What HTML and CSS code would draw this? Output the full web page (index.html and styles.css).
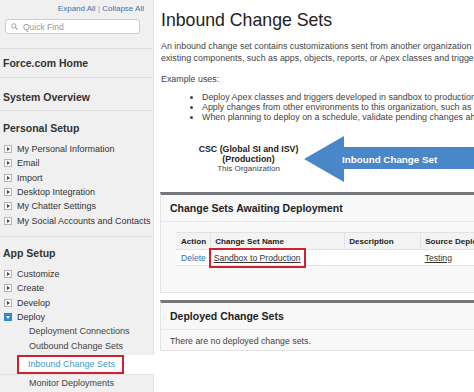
FILE: index.html
```html
<!DOCTYPE html>
<html lang="en">
<head>
  <meta charset="UTF-8" />
  <title>Inbound Change Sets</title>
  <link rel="stylesheet" href="styles.css">
</head>
<body>
  <div class="page">
    <aside class="sidebar">
      <div class="side-top">
        <div class="expand"><a href="#">Expand All</a> | <a href="#">Collapse All</a></div>
        <div class="quick-find">
          <svg width="7" height="7" viewBox="0 0 8 8"><circle cx="3.2" cy="3.2" r="2.4" fill="none" stroke="#999" stroke-width="1"/><path d="M5 5 L7.5 7.5" stroke="#999" stroke-width="1.2"/></svg>
          <span>Quick Find</span>
        </div>
      </div>
      <div class="nav-head home">Force.com Home</div>
      <div class="nav-head overview">System Overview</div>

      <div class="nav-group personal">
        <div class="group-title">Personal Setup</div>
        <div class="item"><span class="tog"></span>My Personal Information</div>
        <div class="item"><span class="tog"></span>Email</div>
        <div class="item"><span class="tog"></span>Import</div>
        <div class="item"><span class="tog"></span>Desktop Integration</div>
        <div class="item"><span class="tog"></span>My Chatter Settings</div>
        <div class="item"><span class="tog"></span>My Social Accounts and Contacts</div>
      </div>

      <div class="nav-group app">
        <div class="group-title">App Setup</div>
        <div class="item"><span class="tog"></span>Customize</div>
        <div class="item"><span class="tog"></span>Create</div>
        <div class="item"><span class="tog"></span>Develop</div>
        <div class="item"><span class="tog open"></span>Deploy</div>
        <div class="sub">Deployment Connections</div>
        <div class="sub">Outbound Change Sets</div>
        <div class="sub-selected"><span class="sel-box">Inbound Change Sets</span></div>
        <div class="sub last">Monitor Deployments</div>
      </div>
    </aside>

    <main class="content">
      <h1>Inbound Change Sets</h1>
      <p class="intro">An inbound change set contains customizations sent from another organization to this organization. It can contain<br>existing components, such as apps, objects, reports, or Apex classes and triggers.</p>
      <p class="uses">Example uses:</p>
      <ul class="use-list">
        <li>Deploy Apex classes and triggers developed in sandbox to production</li>
        <li>Apply changes from other environments to this organization, such as new fields</li>
        <li>When planning to deploy on a schedule, validate pending changes ahead of time</li>
      </ul>

      <div class="flow">
        <div class="org">
          <div class="org-name">CSC (Global SI and ISV)</div>
          <div class="org-name">(Production)</div>
          <div class="org-note">This Organization</div>
        </div>
        <svg class="arrow" width="170" height="46" viewBox="0 0 170 46">
          <path d="M0 23 L40 0 L40 11 L170 11 L170 33 L40 33 L40 46 Z" fill="#4a87c9"/>
          <text x="38" y="27" fill="#fff" font-family="Liberation Sans, Arial, sans-serif" font-size="9.8" font-weight="bold">Inbound Change Set</text>
        </svg>
      </div>

      <section class="block awaiting">
        <div class="block-head">Change Sets Awaiting Deployment</div>
        <div class="block-body">
          <table class="list">
            <tr>
              <th class="c-action">Action</th>
              <th class="c-name">Change Set Name</th>
              <th class="c-desc">Description</th>
              <th class="c-src">Source Deployment Connection</th>
            </tr>
            <tr>
              <td><a class="act" href="#">Delete</a></td>
              <td><a class="marked" href="#">Sandbox to Production</a></td>
              <td></td>
              <td><a class="plain" href="#">Testing</a></td>
            </tr>
          </table>
        </div>
      </section>

      <section class="block deployed">
        <div class="block-head">Deployed Change Sets</div>
        <div class="block-body empty">There are no deployed change sets.</div>
      </section>
    </main>
  </div>
</body>
</html>
```

FILE: styles.css
```css
html, body {
  margin: 0;
  padding: 0;
  background: #fff;
  font-family: 'Liberation Sans', Arial, sans-serif;
  color: #333;
}

.page {
  display: flex;
  width: 474px;
  height: 392px;
  overflow: hidden;
}

/* sidebar */
.sidebar {
  width: 153px;
  flex: none;
  background: #f0f0f0;
  border-right: 1px solid #e2e2e2;
  font-size: 9px;
  white-space: nowrap;
}
.side-top {
  height: 48px;
  padding: 4px 0 0 5px;
  box-sizing: border-box;
}
.expand {
  text-align: right;
  padding-right: 9px;
  font-size: 8px;
  line-height: 10px;
  color: #8a9bb0;
}
.expand a {
  color: #3a73b0;
  text-decoration: none;
}
.quick-find {
  margin-top: 5px;
  width: 135px;
  height: 15px;
  box-sizing: border-box;
  background: #fff;
  border: 1px solid #cdcdcd;
  border-radius: 3px;
  display: flex;
  align-items: center;
  gap: 5px;
  padding-left: 5px;
  font-size: 8.5px;
  color: #999;
}

.nav-head {
  border-top: 1px solid #dedede;
  font-weight: bold;
  font-size: 10.5px;
  padding-left: 3px;
  box-sizing: border-box;
  display: flex;
  align-items: center;
}
.home { height: 29px; }
.overview { height: 33px; padding-top: 5px; }

.nav-group {
  border-top: 1px solid #dedede;
  box-sizing: border-box;
}
.group-title {
  font-weight: bold;
  font-size: 10.5px;
  padding-left: 3px;
  line-height: 13px;
}
.personal {
  height: 126px;
  padding-top: 11px;
}
.personal .group-title { margin-bottom: 7px; }
.app {
  padding-top: 10px;
}
.app .group-title { margin-bottom: 7px; }

.item {
  display: flex;
  align-items: center;
  height: 14.3px;
  padding-left: 4px;
  color: #333;
}
.tog {
  width: 6px;
  height: 6px;
  border: 1px solid #b5b5b5;
  background: #fff;
  margin-right: 5px;
  position: relative;
  flex: none;
}
.tog::after {
  content: "";
  position: absolute;
  left: 2px;
  top: 1px;
  border-left: 3px solid #444;
  border-top: 2px solid transparent;
  border-bottom: 2px solid transparent;
}
.tog.open {
  background: #2d8bc9;
  border-color: #2d8bc9;
}
.tog.open::after {
  left: 1px;
  top: 2px;
  border-top: 3px solid #fff;
  border-left: 2px solid transparent;
  border-right: 2px solid transparent;
  border-bottom: 0;
}
.sub {
  height: 14.4px;
  line-height: 14.4px;
  padding-left: 29px;
  color: #444;
}
.sub-selected {
  margin: 2px -1px 0 17px;
  height: 19px;
  background: #fff;
}
.sel-box {
  display: inline-block;
  box-sizing: border-box;
  width: 107px;
  height: 19px;
  line-height: 15px;
  border: 2px solid #d3202f;
  padding-left: 9px;
  color: #3e9cc6;
}
.sub.last {
  border-top: 1px solid #e2e2e2;
  height: 18px;
  line-height: 17px;
}

/* main */
.content {
  flex: 1;
  min-width: 0;
  padding-left: 7px;
  overflow: hidden;
  white-space: nowrap;
  font-size: 8.9px;
}
.content h1 {
  margin: 8px 0 0;
  font-size: 17.7px;
  font-weight: normal;
  line-height: 24px;
  color: #222;
}
.intro {
  margin: 9px 0 0;
  line-height: 11.7px;
  color: #444;
}
.uses {
  margin: 10px 0 0;
  line-height: 11px;
  color: #444;
}
.use-list {
  margin: 7px 0 0;
  padding-left: 41px;
  line-height: 10px;
  color: #444;
}

.flow {
  display: flex;
  align-items: center;
  margin-top: 14px;
  height: 46px;
  font-size: 8.6px;
}
.org {
  width: 140px;
  margin-left: 20px;
  text-align: center;
  line-height: 9.5px;
}
.org-name {
  font-weight: bold;
  font-size: 8.8px;
  color: #222;
}
.org-note {
  font-size: 8px;
  color: #444;
}
.arrow {
  margin-left: -12px;
  flex: none;
}

.block {
  margin-left: -1px;
  background: #f8f8f8;
  border-top: 3px solid #75777a;
  border-left: 1px solid #e3e3e3;
  border-bottom: 1px solid #e3e3e3;
}
.awaiting { margin-top: 10px; height: 101px; box-sizing: border-box; }
.deployed { margin-top: 7px; height: 51px; box-sizing: border-box; }
.block-head {
  height: 26px;
  line-height: 26px;
  padding-left: 9px;
  font-weight: bold;
  font-size: 10.5px;
  color: #222;
  border-bottom: 1px solid #e8e8e8;
}
.block-body {
  padding: 10px 0 0 15px;
}
.block-body.empty {
  padding: 6px 0 0 9px;
  line-height: 11px;
  font-size: 8.8px;
  color: #444;
}

.list {
  border-collapse: collapse;
  font-size: 8.6px;
  width: 400px;
}
.list th {
  text-align: left;
  font-weight: bold;
  font-size: 8.1px;
  background: #f2f3f3;
  height: 16px;
  padding: 0 4px;
  border-top: 1px solid #e0e3e5;
  border-bottom: 1px solid #e0e3e5;
  border-left: 1px solid #e0e3e5;
  color: #222;
}
.list th:first-child { border-left: 0; padding-left: 5px; }
.list td {
  background: #fff;
  height: 15px;
  padding: 0 4px;
  border-bottom: 1px solid #e3e3e3;
}
.list td:first-child { padding-left: 5px; }
.c-action { width: 25px; }
.c-name { width: 125px; }
.c-desc { width: 67px; }
.act {
  color: #2c6ea8;
  text-decoration: none;
}
.marked {
  color: #333;
  outline: 2px solid #d3202f;
  outline-offset: 3px;
  margin-left: -1px;
}
.plain {
  color: #333;
}
```
